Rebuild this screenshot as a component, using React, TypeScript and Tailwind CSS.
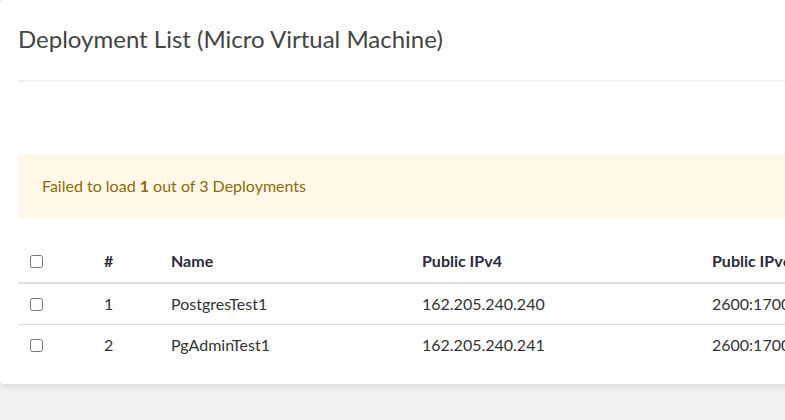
const deployments = [
  { id: 1, name: "PostgresTest1", ipv4: "162.205.240.240", ipv6: "2600:1700:5a51:8f20::1" },
  { id: 2, name: "PgAdminTest1", ipv4: "162.205.240.241", ipv6: "2600:1700:5a51:8f20::2" },
];

const cols = "grid grid-cols-[74px_67px_251px_290px_1fr] items-center";

const App = () => {
  return (
    <div
      className="w-[785px] h-[420px] overflow-hidden bg-[#f2f2f2]"
      style={{ fontFamily: "Lato, 'Noto Sans', sans-serif" }}
    >
      <div className="w-[1000px] bg-white rounded-[4px] shadow-[0_2px_8px_rgba(0,0,0,0.12)] px-[18px] pb-[19px]">
        {/* Header */}
        <div className="h-[82px] pt-[23px] border-b-2 border-[#f2f2f2]">
          <h1 className="text-[24px] leading-[32px] text-[#444444]">
            Deployment List (Micro Virtual Machine)
          </h1>
        </div>

        {/* Warning */}
        <div className="mt-[72px] h-[64px] rounded-[4px] bg-[#fff8e8] px-[24px] flex items-center text-[16px] text-[#8d6b0a] whitespace-pre">
          Failed to load <span className="font-bold">1</span> out of 3 Deployments
        </div>

        {/* Table */}
        <div className="mt-[22px] text-[16px] text-[#333333]">
          <div className={`${cols} h-[44px] border-b-2 border-[#dddddd] font-bold text-[#2b2b38] whitespace-nowrap`}>
            <div className="pl-[12px]">
              <input type="checkbox" className="block w-[13px] h-[13px]" />
            </div>
            <div className="pl-[12px]">#</div>
            <div className="pl-[12px]">Name</div>
            <div className="pl-[12px]">Public IPv4</div>
            <div className="pl-[12px]">Public IPv6</div>
          </div>
          {deployments.map((d, i) => (
            <div
              key={d.id}
              className={`${cols} whitespace-nowrap ${i < deployments.length - 1 ? "h-[41px] border-b border-[#dddddd]" : "h-[40px]"}`}
            >
              <div className="pl-[12px]">
                <input type="checkbox" className="block w-[13px] h-[13px]" />
              </div>
              <div className="pl-[12px]">{d.id}</div>
              <div className="pl-[12px]">{d.name}</div>
              <div className="pl-[12px]">{d.ipv4}</div>
              <div className="pl-[12px]">{d.ipv6}</div>
            </div>
          ))}
        </div>
      </div>
    </div>
  );
};

export default App;
